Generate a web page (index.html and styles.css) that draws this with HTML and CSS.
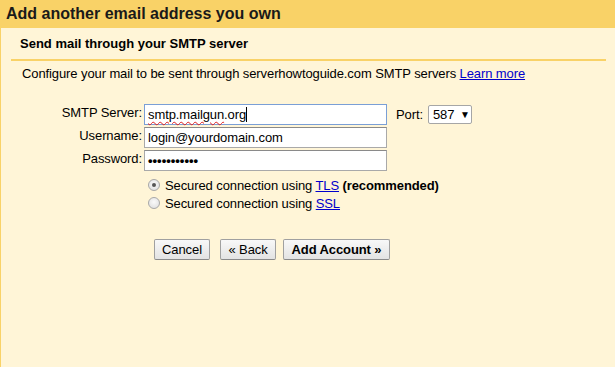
FILE: index.html
```html
<!DOCTYPE html>
<html lang="en">
<head>
    <meta charset="UTF-8">
    <title>Add another email address you own</title>
    <link rel="stylesheet" href="styles.css">
</head>
<body>
    <div class="header">Add another email address you own</div>
    <div class="page">
        <div class="subhead">Send mail through your SMTP server</div>
        <p class="intro">Configure your mail to be sent through serverhowtoguide.com SMTP servers <a href="#">Learn more</a></p>

        <div class="form">
            <div class="row">
                <label class="label">SMTP Server:</label>
                <div class="field focused"><span class="misspelt">smtp.mailgun</span>.org<span class="caret"></span></div>
                <label class="label port-label">Port:</label>
                <div class="select">587 <span class="arrow">&#9660;</span></div>
            </div>
            <div class="row">
                <label class="label">Username:</label>
                <div class="field">login@yourdomain.com</div>
            </div>
            <div class="row">
                <label class="label">Password:</label>
                <div class="field dots">&#8226;&#8226;&#8226;&#8226;&#8226;&#8226;&#8226;&#8226;&#8226;&#8226;&#8226;</div>
            </div>

            <div class="radios">
                <div class="radio-row">
                    <span class="radio checked"></span>
                    <span>Secured connection using <a href="#">TLS</a> <b>(recommended)</b></span>
                </div>
                <div class="radio-row">
                    <span class="radio"></span>
                    <span>Secured connection using <a href="#">SSL</a></span>
                </div>
            </div>

            <div class="buttons">
                <button class="btn btn-cancel">Cancel</button>
                <button class="btn btn-back">&laquo; Back</button>
                <button class="btn btn-add">Add Account &raquo;</button>
            </div>
        </div>
    </div>
</body>
</html>
```

FILE: styles.css
```css
html, body {
    height: 100%;
}
body {
    margin: 0;
    background: #fff5d7;
    font-family: "Liberation Sans", Arial, sans-serif;
    font-size: 13px;
    letter-spacing: -0.1px;
    color: #000;
}
.header {
    height: 28px;
    line-height: 27px;
    background: #f9d267;
    padding-left: 6px;
    font-size: 16px;
    font-weight: bold;
    letter-spacing: 0;
    color: #1a1a1a;
}
.page {
    border-left: 1px solid #f9d267;
    min-height: calc(100% - 28px);
    box-sizing: border-box;
    padding: 0 9px 0 10px;
}
.subhead {
    font-weight: bold;
    letter-spacing: 0;
    line-height: 15px;
    padding: 8px 0 8px 9px;
    border-bottom: 2px solid #f9d267;
}
.intro {
    margin: 5px 0 0 11px;
    line-height: 15px;
}
a {
    color: #0000cc;
    text-decoration: underline;
}
.form {
    margin: 23px 0 0 11px;
}
.row {
    display: flex;
    align-items: center;
    height: 21px;
    margin-bottom: 2px;
}
.label {
    width: 120px;
    margin-right: 2px;
    text-align: right;
    position: relative;
    top: -2px;
}
.field {
    width: 243px;
    height: 21px;
    box-sizing: border-box;
    background: #fff;
    border: 1px solid #a9a9a9;
    border-top-color: #8a8a8a;
    padding: 2px 3px 0;
    line-height: 16px;
    white-space: nowrap;
}
.field.focused {
    border-color: #7a9fd6;
}
.misspelt {
    text-decoration: underline wavy #e02020;
    text-decoration-thickness: 1px;
    text-underline-offset: 2px;
}
.caret {
    display: inline-block;
    width: 1px;
    height: 15px;
    background: #000;
    vertical-align: -3px;
}
.dots {
    font-size: 13px;
    font-weight: bold;
    letter-spacing: 0;
    line-height: 15px;
}
.port-label {
    width: auto;
    margin: 0 5px 0 9px;
    top: 0;
}
.select {
    width: 44px;
    height: 19px;
    box-sizing: border-box;
    background: #fff;
    border: 1px solid #a6a6a6;
    border-radius: 2px;
    padding-left: 4px;
    line-height: 17px;
}
.select .arrow {
    font-size: 10px;
    margin-left: 2px;
    vertical-align: 1px;
}
.radios {
    margin: 5px 0 0 126px;
}
.radio-row {
    display: flex;
    align-items: center;
    height: 18px;
    gap: 5px;
}
.radio {
    width: 12px;
    height: 12px;
    box-sizing: border-box;
    border-radius: 50%;
    border: 1px solid #a8a8a8;
    background: radial-gradient(circle at 50% 40%, #fafafa, #dcdcdc);
    position: relative;
}
.radio.checked::after {
    content: "";
    position: absolute;
    left: 3px;
    top: 3px;
    width: 4px;
    height: 4px;
    border-radius: 50%;
    background: #555;
}
.buttons {
    margin: 27px 0 0 132px;
    display: flex;
}
.btn {
    height: 21px;
    padding: 0;
    font-family: "Liberation Sans", Arial, sans-serif;
    font-size: 13px;
    letter-spacing: -0.1px;
    color: #000;
    background: linear-gradient(#f8f8f8, #e3e3e3);
    border: 1px solid #a0a0a0;
    border-bottom-color: #8a8a8a;
    border-radius: 2px;
}
.btn-cancel {
    width: 56px;
    margin-right: 10px;
}
.btn-back {
    width: 56px;
    margin-right: 7px;
}
.btn-add {
    width: 107px;
    font-weight: bold;
}
```
